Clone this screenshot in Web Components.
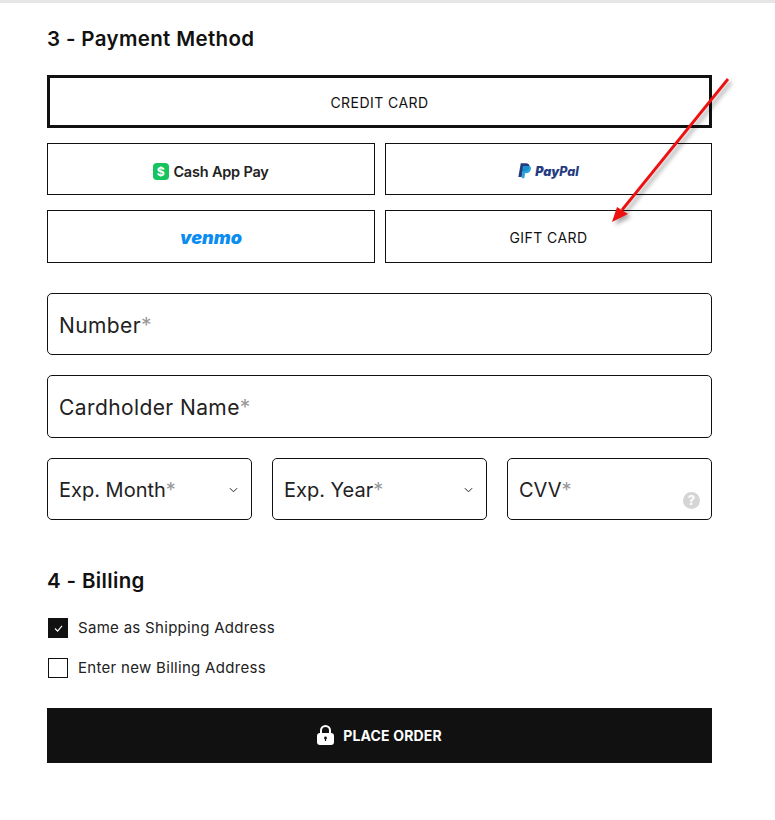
<!DOCTYPE html>
<html lang="en">
<head>
<meta charset="utf-8">
<title>Checkout</title>
<style>
  html, body { margin: 0; background: #fff; }
  body { font-family: "Inter", "Liberation Sans", sans-serif; color: #111; }
</style>
</head>
<body>
<checkout-form>
  <section-title slot="payment-title">3 - Payment Method</section-title>

  <pay-option slot="methods" class="wide" selected>CREDIT CARD</pay-option>
  <pay-option slot="methods" logo>
    <svg width="16" height="17" viewBox="0 0 17 18"><rect width="17" height="18" rx="4" fill="#16c45f"/><text x="8.5" y="14" text-anchor="middle" font-family="Inter, sans-serif" font-size="13" font-weight="700" fill="#fff">$</text></svg>
    <span class="brand-cash">Cash App Pay</span>
  </pay-option>
  <pay-option slot="methods" logo>
    <svg width="13" height="16" viewBox="0 0 15 18"><path d="M3.2 0h5.600c3.200 0 5 1.700 4.500 4.600-.6 3.400-2.900 5-6 5H5.200l-1 6.200H.4z" fill="#253b80"/><path d="M5.600 3.200h6.200c2.600 0 3.700 1.600 3 4-.7 2.900-2.800 4.300-5.400 4.300H8.200l-.9 6H4.200z" fill="#179bd7" opacity=".9"/></svg>
    <span class="brand-paypal"><b>Pay</b><i>Pal</i></span>
  </pay-option>
  <pay-option slot="methods"><span class="brand-venmo">venmo</span></pay-option>
  <pay-option slot="methods">GIFT CARD</pay-option>

  <form-field slot="fields" class="wide">Number</form-field>
  <form-field slot="fields" class="wide">Cardholder Name</form-field>
  <card-row slot="fields">
    <form-field kind="select">Exp. Month</form-field>
    <form-field kind="select">Exp. Year</form-field>
    <form-field kind="help">CVV</form-field>
  </card-row>

  <section-title slot="billing-title">4 - Billing</section-title>
  <check-row slot="billing" checked>Same as Shipping Address</check-row>
  <check-row slot="billing">Enter new Billing Address</check-row>

  <place-order slot="submit">PLACE ORDER</place-order>
  <note-arrow slot="overlay"></note-arrow>
</checkout-form>

<script>
  const formTemplate = document.createElement('template');
  formTemplate.innerHTML = `
    <style>
      :host { display: block; position: relative; width: 775px; height: 820px; box-sizing: border-box; border-top: 3px solid #e6e6e6; padding: 0 63px 0 47px; }
      .head-pay { height: 72px; display: flex; align-items: center; }
      .methods { display: grid; grid-template-columns: 328px 327px; column-gap: 10px; grid-template-rows: 53px 52px 53px; row-gap: 15px; }
      ::slotted(.wide) { grid-column: 1 / -1; }
      .fields { display: flex; flex-direction: column; gap: 20px; margin-top: 30px; }
      .head-bill { height: 50px; margin-top: 36px; display: flex; align-items: center; }
      .billing { display: flex; flex-direction: column; gap: 20px; margin-top: 12px; }
      .submit { margin-top: 30px; }
    </style>
    <div class="head-pay"><slot name="payment-title"></slot></div>
    <div class="methods"><slot name="methods"></slot></div>
    <div class="fields"><slot name="fields"></slot></div>
    <div class="head-bill"><slot name="billing-title"></slot></div>
    <div class="billing"><slot name="billing"></slot></div>
    <div class="submit"><slot name="submit"></slot></div>
    <slot name="overlay"></slot>
  `;

  class CheckoutForm extends HTMLElement {
    constructor() {
      super();
      this.attachShadow({ mode: 'open' });
      this.shadowRoot.appendChild(formTemplate.content.cloneNode(true));
    }
  }

  class SectionTitle extends HTMLElement {
    constructor() {
      super();
      this.attachShadow({ mode: 'open' }).innerHTML = `
        <style>
          :host { display: block; font-size: 20.5px; font-weight: 600; line-height: 28px; color: #111; letter-spacing: .35px; }
        </style>
        <slot></slot>`;
    }
  }

  class PayOption extends HTMLElement {
    constructor() {
      super();
      this.attachShadow({ mode: 'open' }).innerHTML = `
        <style>
          :host { display: flex; align-items: center; justify-content: center; gap: 4px; box-sizing: border-box; padding-top: 2px; border: 1px solid #111; font-size: 14px; letter-spacing: .45px; color: #111; background: #fff; }
          :host([selected]) { border-width: 3px; }
          :host([logo]) { padding-top: 4px; }
          ::slotted(.brand-cash) { font-size: 14.5px; font-weight: 600; letter-spacing: -.2px; color: #222; }
          ::slotted(.brand-paypal) { font-size: 12.5px; font-weight: 800; font-style: italic; letter-spacing: 0; color: #253b80; }
          ::slotted(.brand-venmo) { font-size: 18px; font-weight: 900; font-style: italic; letter-spacing: 0; color: #0a8cf0; }
        </style>
        <slot></slot>`;
    }
  }

  class FormField extends HTMLElement {
    constructor() {
      super();
      const kind = this.getAttribute('kind');
      let extra = '';
      if (kind === 'select') {
        extra = `<svg class="chev" width="9" height="6" viewBox="0 0 10 6"><path d="M1 1l4 4 4-4" fill="none" stroke="#222" stroke-width="1.1"/></svg>`;
      } else if (kind === 'help') {
        extra = `<span class="help">?</span>`;
      }
      this.attachShadow({ mode: 'open' }).innerHTML = `
        <style>
          :host { display: block; position: relative; box-sizing: border-box; height: 62.4px; border: 1px solid #111; border-radius: 5px; padding: 0 11px; font-size: 20px; line-height: 60px; color: #222; background: #fff; }
          :host(.wide) { font-size: 21px; letter-spacing: .4px; }
          :host(.wide) .label { top: 2px; }
          .star { color: #999; }
          .chev { position: absolute; right: 13px; top: 28px; }
          .help { position: absolute; right: 11px; bottom: 10px; width: 17px; height: 17px; border-radius: 50%; background: #d5d5d5; color: #fff; font-size: 13px; font-weight: 700; line-height: 17px; text-align: center; }
          .label { position: relative; top: 1px; }
        </style>
        <span class="label"><slot></slot><span class="star">*</span></span>${extra}`;
    }
  }

  class CardRow extends HTMLElement {
    constructor() {
      super();
      this.attachShadow({ mode: 'open' }).innerHTML = `
        <style>
          :host { display: grid; grid-template-columns: 205px 215px 205px; column-gap: 20px; }
        </style>
        <slot></slot>`;
    }
  }

  class CheckRow extends HTMLElement {
    constructor() {
      super();
      const on = this.hasAttribute('checked');
      this.attachShadow({ mode: 'open' }).innerHTML = `
        <style>
          :host { display: flex; align-items: center; gap: 10px; height: 20px; padding-left: 1px; font-size: 15px; color: #222; letter-spacing: .3px; }
          .box { width: 20px; height: 20px; box-sizing: border-box; border: 1px solid #111; background: ${on ? '#111' : '#fff'}; display: flex; align-items: center; justify-content: center; }
          .text { position: relative; top: -1px; }
        </style>
        <span class="box">${on ? '<svg width="9" height="7" viewBox="0 0 10 8"><path d="M1 4l3 3 5-6" fill="none" stroke="#fff" stroke-width="1.3"/></svg>' : ''}</span>
        <span class="text"><slot></slot></span>`;
    }
  }

  class PlaceOrder extends HTMLElement {
    constructor() {
      super();
      this.attachShadow({ mode: 'open' }).innerHTML = `
        <style>
          :host { display: flex; align-items: center; justify-content: center; gap: 9px; height: 55px; background: #111; color: #fff; font-size: 14px; font-weight: 700; letter-spacing: .15px; }
          svg { position: relative; top: -1px; }
        </style>
        <svg width="17" height="20" viewBox="0 0 17 20"><path d="M4 9V5.500a4.500 4.500 0 0 1 9 0V9" fill="none" stroke="#fff" stroke-width="2"/><rect y="8" width="17" height="12" rx="3" fill="#fff"/><circle cx="8.500" cy="13" r="1.400" fill="#111"/><rect x="7.900" y="13" width="1.200" height="3" fill="#111"/></svg>
        <slot></slot>`;
    }
  }

  class NoteArrow extends HTMLElement {
    constructor() {
      super();
      this.attachShadow({ mode: 'open' }).innerHTML = `
        <style>
          :host { position: absolute; left: 600px; top: 73px; width: 140px; height: 155px; pointer-events: none; }
          svg { display: block; filter: drop-shadow(3px 3px 2px rgba(0,0,0,.35)); }
        </style>
        <svg width="140" height="155" viewBox="600 76 140 155">
          <path d="M728 79L622 210" stroke="#ee1111" stroke-width="2.800" fill="none"/>
          <path d="M612 222l5-15 11 7z" fill="#ee1111"/>
        </svg>`;
    }
  }

  customElements.define('checkout-form', CheckoutForm);
  customElements.define('section-title', SectionTitle);
  customElements.define('pay-option', PayOption);
  customElements.define('form-field', FormField);
  customElements.define('card-row', CardRow);
  customElements.define('check-row', CheckRow);
  customElements.define('place-order', PlaceOrder);
  customElements.define('note-arrow', NoteArrow);
</script>
</body>
</html>
